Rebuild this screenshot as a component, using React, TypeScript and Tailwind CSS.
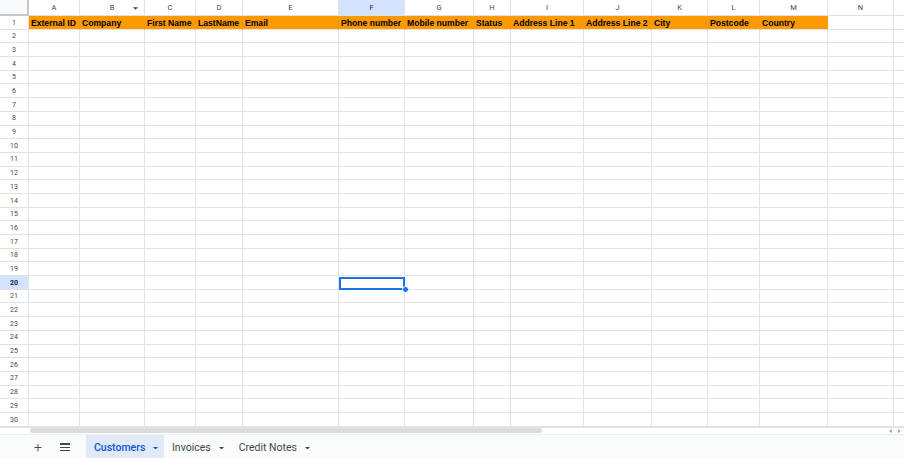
import React from 'react';

type Col = { letter: string; w: string; title?: string };

const cols: Col[] = [
  { letter: 'A', w: 'w-[51px]', title: 'External ID' },
  { letter: 'B', w: 'w-[65px]', title: 'Company' },
  { letter: 'C', w: 'w-[51px]', title: 'First Name' },
  { letter: 'D', w: 'w-[47px]', title: 'LastName' },
  { letter: 'E', w: 'w-[96px]', title: 'Email' },
  { letter: 'F', w: 'w-[66px]', title: 'Phone number' },
  { letter: 'G', w: 'w-[69px]', title: 'Mobile number' },
  { letter: 'H', w: 'w-[37px]', title: 'Status' },
  { letter: 'I', w: 'w-[73px]', title: 'Address Line 1' },
  { letter: 'J', w: 'w-[68px]', title: 'Address Line 2' },
  { letter: 'K', w: 'w-[56px]', title: 'City' },
  { letter: 'L', w: 'w-[52px]', title: 'Postcode' },
  { letter: 'M', w: 'w-[68px]', title: 'Country' },
  { letter: 'N', w: 'w-[66px]' },
  { letter: '', w: 'w-[40px]' },
];

const rows = Array.from({ length: 30 }, (_, i) => i + 1);

const Caret = ({ className }: { className?: string }) => (
  <svg viewBox="0 0 10 5" className={className}>
    <path d="M0 0 L10 0 L5 5 Z" fill="currentColor" />
  </svg>
);

export default function App() {
  return (
    <div className="w-[904px] h-[458px] flex flex-col bg-white overflow-hidden font-['Liberation_Sans',Arial,sans-serif]">
      {/* Column headers */}
      <div className="flex h-[16px] shrink-0">
        <div className="w-[29px] shrink-0 bg-[#f8f9fa] border-r-[2px] border-b-[2px] border-[#c4c7c5]" />
        {cols.map(c => (
          <div
            key={c.letter || 'x'}
            className={`${c.w} shrink-0 relative flex items-center justify-center pt-[1px] border-r border-b border-[#e1e3e1] text-[7.5px] font-['Roboto',sans-serif] ${
              c.letter === 'F' ? 'bg-[#d3e3fd] text-[#0b1f4f]' : 'bg-white text-[#444746]'
            }`}
          >
            {c.letter}
            {c.letter === 'B' && <Caret className="absolute right-[6px] top-[7px] w-[5px] h-[3px] text-[#444746]" />}
          </div>
        ))}
      </div>

      {/* Grid rows */}
      {rows.map(r => (
        <div key={r} className="flex h-[13.7px] shrink-0">
          <div
            className={`w-[29px] shrink-0 flex items-center justify-center pt-[1px] border-r border-b border-[#e1e3e1] text-[7px] font-['Roboto',sans-serif] ${
              r === 20 ? 'bg-[#d3e3fd] text-[#0b1f4f] font-bold' : 'bg-white text-[#444746]'
            }`}
          >
            {r}
          </div>
          {cols.map(c => {
            const filled = r === 1 && !!c.title;
            const selected = r === 20 && c.letter === 'F';
            return (
              <div
                key={c.letter || 'x'}
                className={`${c.w} shrink-0 relative border-b border-r flex items-center overflow-hidden whitespace-nowrap ${
                  filled ? 'bg-[#ff9900] border-[#ff9900] border-b-[#e2e3e3] px-[2px] pt-[2px] text-[8.6px] font-bold text-black' : 'border-[#e2e3e3]'
                } ${selected ? 'overflow-visible' : ''}`}
              >
                {filled ? c.title : null}
                {selected && (
                  <>
                    <div className="absolute left-0 top-[0.5px] -right-[1px] -bottom-[1px] border-2 border-[#1a73e8] z-10" />
                    <div className="absolute -right-[4.5px] -bottom-[4.5px] w-[7px] h-[7px] rounded-full bg-[#1a73e8] border border-white z-20" />
                  </>
                )}
              </div>
            );
          })}
        </div>
      ))}

      {/* Horizontal scrollbar */}
      <div className="h-[7px] shrink-0 flex items-center bg-white border-t border-[#e1e3e1]">
        <div className="ml-[30px] w-[512px] h-[5px] rounded-full bg-[#dadce0]" />
        <div className="ml-auto flex items-center gap-[6px] pr-[3px] text-[#9aa0a6]">
          <svg viewBox="0 0 4 6" className="w-[3px] h-[4px]"><path d="M4 0 L0 3 L4 6 Z" fill="currentColor" /></svg>
          <svg viewBox="0 0 4 6" className="w-[3px] h-[4px]"><path d="M0 0 L4 3 L0 6 Z" fill="currentColor" /></svg>
        </div>
      </div>

      {/* Sheet tabs */}
      <div className="flex-1 flex items-stretch bg-[#f9fbfd] font-['Roboto',sans-serif] border-t border-[#eef0f2]">
        <div className="w-[86px] flex items-center shrink-0 pt-[2px]">
          <span className="ml-[34px] text-[14px] leading-none text-[#444746] font-light">+</span>
          <div className="ml-[18px] flex flex-col gap-[2px]">
            <div className="w-[10px] h-[1.3px] bg-[#444746]" />
            <div className="w-[10px] h-[1.3px] bg-[#444746]" />
            <div className="w-[10px] h-[1.3px] bg-[#444746]" />
          </div>
        </div>
        <div className="w-[78px] flex items-center bg-[#e1e9f7] text-[#0b57d0] text-[10.5px] font-medium pl-[8px] pt-[3px]">
          Customers
          <Caret className="ml-[8px] w-[5px] h-[2.5px]" />
        </div>
        <div className="flex items-center text-[#444746] text-[10.5px] pl-[8px] pt-[3px]">
          Invoices
          <Caret className="ml-[8px] w-[5px] h-[2.5px]" />
        </div>
        <div className="flex items-center text-[#444746] text-[10.5px] pl-[15px] pt-[3px]">
          Credit Notes
          <Caret className="ml-[8px] w-[5px] h-[2.5px]" />
        </div>
      </div>
    </div>
  );
}
